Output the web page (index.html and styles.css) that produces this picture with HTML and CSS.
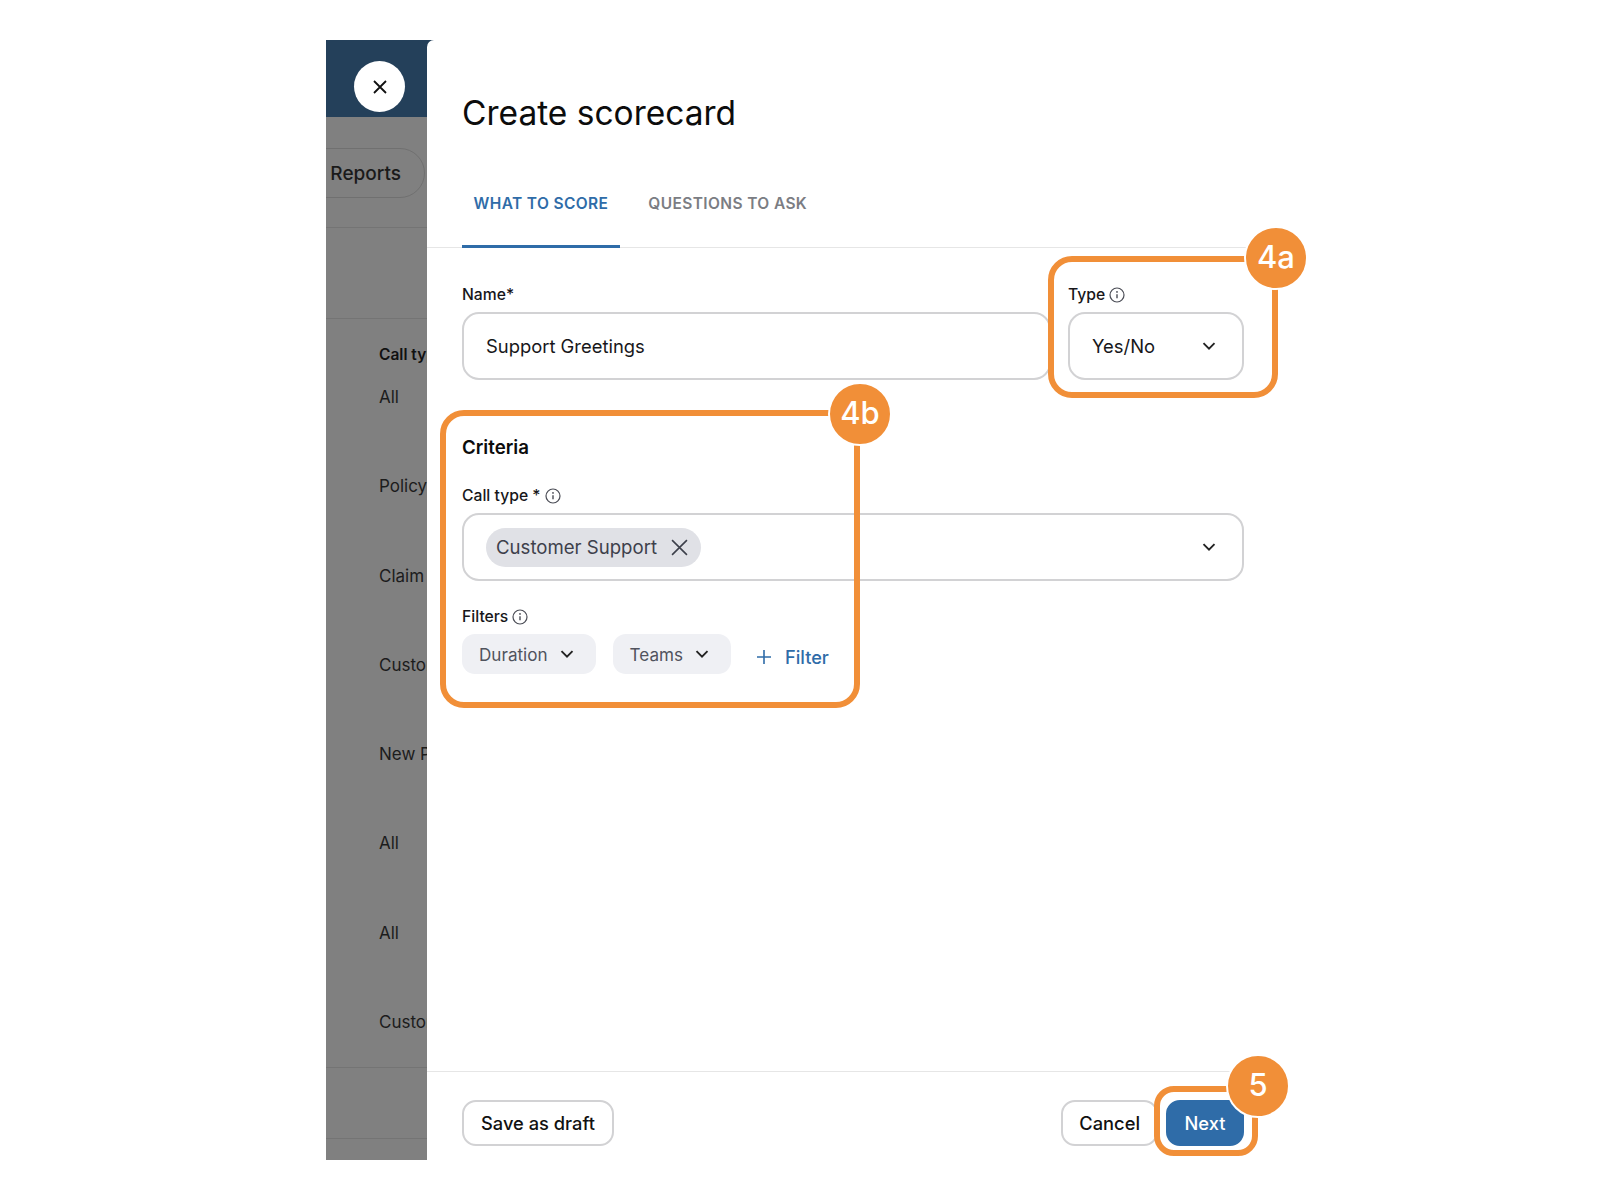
FILE: index.html
```html
<!DOCTYPE html>
<html lang="en">
<head>
<meta charset="utf-8">
<title>Create scorecard</title>
<link rel="stylesheet" href="styles.css">
</head>
<body>
<svg class="sprite" width="0" height="0" aria-hidden="true">
  <symbol id="info" viewBox="0 0 16 16"><circle cx="8" cy="8" r="7" fill="none" stroke="currentColor" stroke-width="1.2"/><path d="M8 7.2v4" fill="none" stroke="currentColor" stroke-width="1.4"/><circle cx="8" cy="4.9" r=".9" fill="currentColor"/></symbol>
  <symbol id="chev" viewBox="0 0 14 14"><path d="M1.5 4.2 7 9.7l5.5-5.5" fill="none" stroke="currentColor" stroke-width="1.9"/></symbol>
</svg>
<main class="stage">
  <aside class="backdrop">
    <div class="topbar"><button class="close"><svg viewBox="0 0 16 16" width="16" height="16"><path d="M2 2l12 12M14 2 2 14" stroke="#111" stroke-width="1.8" fill="none"/></svg></button></div>
    <div class="page">
      <div class="nav-row"><span class="reports">Reports</span></div>
      <div class="gap-row"></div>
      <div class="list">
        <div class="list-head">Call type</div>
        <div class="list-item">All</div>
        <div class="list-item">Policy review</div>
        <div class="list-item">Claim status</div>
        <div class="list-item">Customer</div>
        <div class="list-item">New Policy</div>
        <div class="list-item">All</div>
        <div class="list-item">All</div>
        <div class="list-item">Customer</div>
      </div>
      <div class="foot-row"></div>
    </div>
  </aside>
  <section class="modal">
    <h1 class="title">Create scorecard</h1>
    <nav class="tabs">
      <a class="tab active">WHAT TO SCORE</a>
      <a class="tab">QUESTIONS TO ASK</a>
    </nav>
    <form class="form">
      <div class="row">
        <div class="field grow">
          <label class="label">Name*</label>
          <div class="input">Support Greetings</div>
        </div>
        <div class="field type">
          <label class="label">Type <svg class="info"><use href="#info"/></svg></label>
          <div class="input select">Yes/No <svg class="chev"><use href="#chev"/></svg></div>
        </div>
      </div>
      <h2 class="heading">Criteria</h2>
      <div class="field">
        <label class="label">Call type * <svg class="info"><use href="#info"/></svg></label>
        <div class="input select">
          <span class="chip">Customer Support <svg viewBox="0 0 16 16" width="17" height="17"><path d="M1 1l14 14M15 1 1 15" stroke="#3d404b" stroke-width="1.5" fill="none"/></svg></span>
          <svg class="chev"><use href="#chev"/></svg>
        </div>
      </div>
      <div class="field filters">
        <label class="label">Filters <svg class="info"><use href="#info"/></svg></label>
        <div class="filter-row">
          <span class="pill">Duration <svg class="chev"><use href="#chev"/></svg></span>
          <span class="pill">Teams <svg class="chev"><use href="#chev"/></svg></span>
          <span class="add"><svg viewBox="0 0 16 16" width="16" height="16"><path d="M8 1v14M1 8h14" stroke="#2f6ca8" stroke-width="1.6" fill="none"/></svg> Filter</span>
        </div>
      </div>
    </form>
    <footer class="footer">
      <button class="btn">Save as draft</button>
      <div class="actions">
        <button class="btn">Cancel</button>
        <button class="btn primary">Next</button>
      </div>
    </footer>
  </section>
  <div class="callout box-a"></div>
  <div class="callout box-b"></div>
  <div class="callout box-c"></div>
  <div class="badge badge-a">4a</div>
  <div class="badge badge-b">4b</div>
  <div class="badge badge-c">5</div>
</main>
</body>
</html>
```
FILE: styles.css
```css
* { box-sizing: border-box; }
html, body { margin: 0; padding: 0; background: #fff; }
body { font-family: Inter, "Liberation Sans", sans-serif; color: #111; height: 1200px; overflow: hidden; }
.sprite { position: absolute; }

.stage { position: relative; display: flex; width: 953px; height: 1120px; margin: 40px 0 0 326px; background: #24405a; }

.backdrop { width: 101px; flex: none; display: flex; flex-direction: column; overflow: hidden; }
.topbar { height: 77px; flex: none; padding: 21px 0 0 28px; }
.close { width: 51px; height: 51px; border: 0; border-radius: 50%; background: #fff; display: flex; align-items: center; justify-content: center; padding: 0; }
.page { flex: 1; background: #808080; display: flex; flex-direction: column; }
.nav-row { height: 111px; flex: none; display: flex; justify-content: flex-end; padding: 31px 2px 0 0; border-bottom: 1px solid #747474; }
.reports { width: 140px; height: 50px; flex: none; border: 1px solid #707070; border-radius: 25px; font-size: 19px; font-weight: 500; color: #1a1a1a; display: flex; align-items: center; justify-content: flex-end; padding-right: 23px; }
.gap-row { height: 91px; flex: none; border-bottom: 1px solid #747474; }
.list { height: 749px; flex: none; padding-left: 53px; border-bottom: 1px solid #747474; }
.list-head { font-size: 15.5px; font-weight: 600; color: #111; white-space: nowrap; height: 36px; line-height: 72px; }
.list-item { font-size: 17px; color: #1c1c1c; white-space: nowrap; height: 89.3px; line-height: 24px; padding-top: 30px; }
.foot-row { height: 71px; flex: none; border-bottom: 1px solid #747474; }

.modal { flex: 1; min-width: 0; display: flex; flex-direction: column; background: #fff; border-top-left-radius: 7px; }
.title { margin: 51px 0 0; padding-left: 35px; font-size: 33.5px; line-height: 44px; font-weight: 400; color: #0c0c0c; }
.tabs { margin-top: 24px; height: 89px; display: flex; gap: 17px; padding-left: 35px; border-bottom: 1px solid #e6e6e6; }
.tab { height: 89px; padding: 0 11.5px; display: flex; align-items: center; font-size: 15.5px; font-weight: 600; letter-spacing: .38px; color: #7b7d83; white-space: nowrap; }
.tab.active { color: #2f6ca8; border-bottom: 3px solid #2f6ca8; padding-top: 3px; }

.form { padding: 35px 35px 0; display: flex; flex-direction: column; }
.row { display: flex; gap: 17px; }
.field { display: flex; flex-direction: column; }
.grow { flex: 1; min-width: 0; }
.type { width: 176px; flex: none; }
.label { display: flex; align-items: center; height: 20px; padding-top: 4px; margin-bottom: 9px; font-size: 15.7px; font-weight: 500; line-height: 20px; color: #17171a; white-space: pre; }
.info { width: 16px; height: 16px; color: #4a4c55; }
.input { height: 68px; border: 2px solid #d2d2d4; border-radius: 17px; padding: 0 22px; display: flex; align-items: center; font-size: 18.4px; color: #17171a; background: #fff; }
.select { justify-content: space-between; padding-right: 26px; }
.chev { width: 14px; height: 14px; color: #222; flex: none; }
.heading { margin: 55px 0 0; height: 26px; font-size: 18.7px; line-height: 26px; font-weight: 600; color: #0c0c0c; }
.heading + .field { margin-top: 23px; }
.chip { height: 39px; display: inline-flex; align-items: center; gap: 14px; padding: 0 13px 0 10px; background: #e0e1e6; border-radius: 20px; font-size: 18.6px; color: #3d404b; }
.filters { margin-top: 24px; }
.filters .label { margin-bottom: 9px; }
.filter-row { display: flex; align-items: flex-start; gap: 17px; }
.pill { height: 40px; display: inline-flex; align-items: center; gap: 12px; padding: 0 22px 0 17px; background: #eff0f4; border-radius: 13px; font-size: 17.1px; color: #50535d; }
.add { display: inline-flex; align-items: center; gap: 13px; height: 46px; margin-left: 8px; font-size: 18.2px; font-weight: 500; color: #2f6ca8; }

.footer { margin-top: auto; height: 89px; flex: none; padding: 28px 35px 0; border-top: 1px solid #e6e6e6; display: flex; justify-content: space-between; align-items: flex-start; }
.actions { display: flex; gap: 8px; }
.btn { height: 46px; padding: 0 17px; border: 2px solid #d2d2d4; border-radius: 14px; background: #fff; font: 500 18.3px Inter, "Liberation Sans", sans-serif; color: #111; }
.actions .btn { padding: 0 16px; }
.actions .btn.primary { background: #2f6ca8; border-color: #2f6ca8; color: #fff; width: 78px; padding: 0; }

.callout { position: absolute; border: 6px solid #f18f38; border-radius: 24px; }
.box-a { left: 722px; top: 216px; width: 230px; height: 142px; }
.box-b { left: 114px; top: 370px; width: 420px; height: 298px; }
.box-c { left: 828px; top: 1046px; width: 104px; height: 70px; border-radius: 20px; }
.badge { position: absolute; width: 64px; height: 64px; padding-bottom: 4px; border: 2px solid #fff; border-radius: 50%; background: #f18f38; color: #fff; font-size: 31px; font-weight: 500; display: flex; align-items: center; justify-content: center; }
.badge-a { left: 918px; top: 186px; }
.badge-b { left: 502px; top: 342px; }
.badge-c { left: 900px; top: 1014px; }
```
